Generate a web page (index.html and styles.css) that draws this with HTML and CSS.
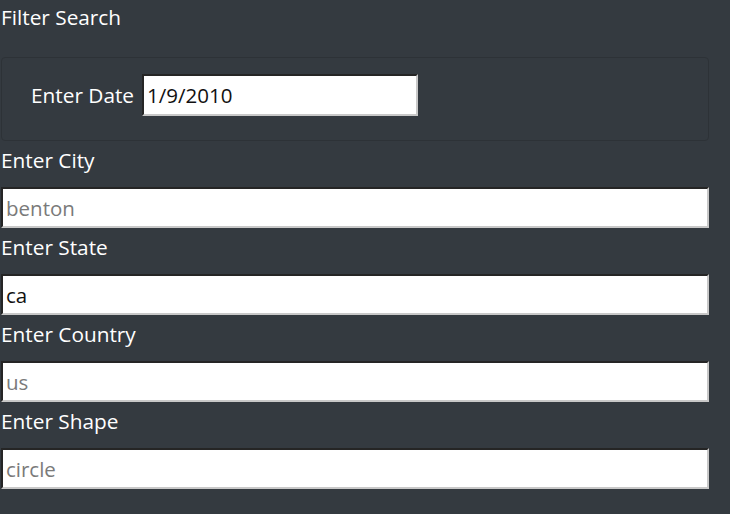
FILE: index.html
```html
<!DOCTYPE html>
<html>
<head>
<meta charset="utf-8">
<link rel="stylesheet" href="styles.css">
</head>
<body>
<div class="page">
  <div class="title">Filter Search</div>
  <div class="box">
    <label class="date-label" for="date">Enter Date</label>
    <input class="date-input" id="date" type="text" value="1/9/2010">
  </div>
  <div class="field">
    <label for="city">Enter City</label>
    <input id="city" type="text" placeholder="benton">
  </div>
  <div class="field">
    <label for="state">Enter State</label>
    <input id="state" type="text" value="ca">
  </div>
  <div class="field">
    <label for="country">Enter Country</label>
    <input id="country" type="text" placeholder="us">
  </div>
  <div class="field">
    <label for="shape">Enter Shape</label>
    <input id="shape" type="text" placeholder="circle">
  </div>
</div>
</body>
</html>
```
FILE: styles.css
```css
html, body {
  margin: 0;
  padding: 0;
  background: #343a40;
  height: 100%;
}
body {
  font-family: "Open Sans", "Noto Sans", sans-serif;
  font-size: 20.8px;
  color: #ffffff;
}
.page {
  width: 708px;
  padding: 0 0 0 1px;
}
.title {
  line-height: 30px;
  padding-top: 2px;
  padding-left: 0;
}
.box {
  margin-top: 25px;
  border: 1px solid #2d3237;
  border-radius: 4px;
  display: flex;
  align-items: flex-start;
  padding: 16px 0 0 29px;
  box-sizing: border-box;
  height: 84px;
}
.date-label {
  line-height: 42px;
  margin-right: 8px;
}
input {
  font-family: inherit;
  font-size: 20.5px;
  color: #111;
  background: #fff;
  border: 2px inset #8a8a8a;
  border-color: #7a7a7a #c8c8c8 #c8c8c8 #7a7a7a;
  box-sizing: border-box;
  height: 41px;
  padding: 0 3px;
  margin: 0;
  outline: none;
}
input::placeholder {
  color: #7a7a7a;
}
.date-input {
  width: 276px;
  height: 42px;
}
.field {
  padding-top: 4px;
}
.field label {
  display: block;
  line-height: 30px;
  margin-bottom: 12px;
  padding-left: 0;
}
.field input {
  display: block;
  width: 708px;
}
.field + .field {
  padding-top: 4px;
}
```
